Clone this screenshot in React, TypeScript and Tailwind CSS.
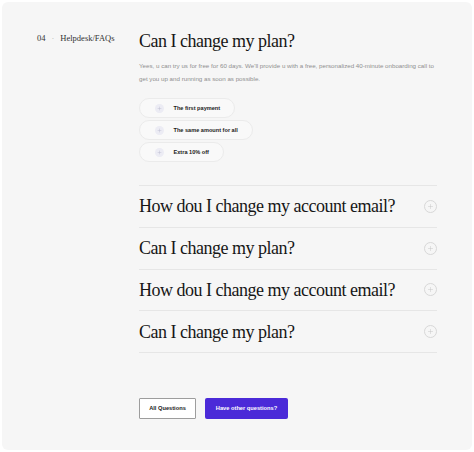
import { Plus } from 'lucide-react';

const serif = { fontFamily: '"Liberation Serif", "Times New Roman", serif' };

const options = ['The first payment', 'The same amount for all', 'Extra 10% off'];

const questions = [
  'How dou I change my account email?',
  'Can I change my plan?',
  'How dou I change my account email?',
  'Can I change my plan?',
];

export default function App() {
  return (
    <div className="min-h-screen bg-white p-[2px] font-['Liberation_Sans',Arial,sans-serif]">
      <div className="h-[448px] rounded-[6px] bg-[#f6f6f6] flex px-[35px] pt-[28px]">
        {/* label */}
        <div className="w-[102px] shrink-0">
          <p
            className="mt-[2px] text-[8.5px] leading-[12px] text-[#333333] flex items-center"
            style={serif}
          >
            <span>04</span>
            <span className="mx-[6px] text-[#b5b5b5]">·</span>
            <span>Helpdesk/FAQs</span>
          </p>
        </div>

        {/* content */}
        <div className="w-[298px] shrink-0">
          <h2
            className="text-[18px] leading-[22px] tracking-[-0.5px] text-[#161616]"
            style={serif}
          >
            Can I change my plan?
          </h2>
          <p className="mt-[7px] text-[6.2px] leading-[13px] text-[#8f8f8f] whitespace-nowrap">
            Yees, u can try us for free for 60 days. We'll provide u with a free, personalized 40-minute onboarding call to
            <br />
            get you up and running as soon as possible.
          </p>

          <div className="mt-[13px] flex flex-col items-start gap-[2px]">
            {options.map((o) => (
              <div
                key={o}
                className="h-[20px] rounded-full border border-[#ebebeb] bg-[#f9f9f9] pl-[15px] pr-[14px] flex items-center gap-[9.5px]"
              >
                <span className="w-[9px] h-[9px] rounded-full bg-[#ececf4] flex items-center justify-center">
                  <Plus className="w-[5px] h-[5px] text-[#b9b9cf]" strokeWidth={2} />
                </span>
                <span className="text-[5.6px] font-bold text-[#1a1a1a]">{o}</span>
              </div>
            ))}
          </div>

          <div className="mt-[23px] border-t border-[#e6e6e6]">
            {questions.map((q, i) => (
              <div
                key={i}
                className="h-[41.75px] border-b border-[#e6e6e6] flex items-center justify-between"
              >
                <span
                  className="text-[18px] leading-[22px] tracking-[-0.5px] text-[#161616]"
                  style={serif}
                >
                  {q}
                </span>
                <span className="w-[13px] h-[13px] rounded-full border border-[#d8d8d8] flex items-center justify-center">
                  <Plus className="w-[7px] h-[7px] text-[#c2c2c2]" strokeWidth={1.5} />
                </span>
              </div>
            ))}
          </div>

          <div className="mt-[45px] flex gap-[9px]">
            <button className="w-[57px] h-[21px] rounded-[1px] border border-[#9d9d9d] bg-white text-[5.7px] font-bold text-[#1a1a1a]">
              All Questions
            </button>
            <button className="w-[83px] h-[21px] rounded-[2px] bg-[#4b2ad8] text-[5.7px] font-bold text-white">
              Have other questions?
            </button>
          </div>
        </div>
      </div>
    </div>
  );
}
